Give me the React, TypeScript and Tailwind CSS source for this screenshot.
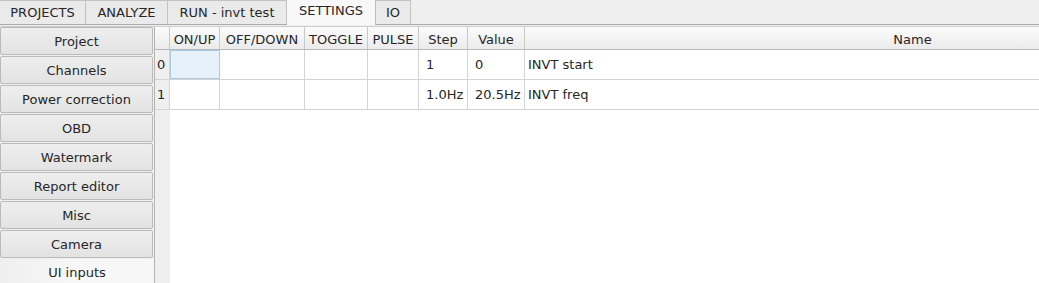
const tabs = [
  { label: 'PROJECTS', w: 'w-[86px]' },
  { label: 'ANALYZE', w: 'w-[82px]' },
  { label: 'RUN - invt test', w: 'w-[119px]' },
  { label: 'SETTINGS', w: 'w-[89px]', active: true },
  { label: 'IO', w: 'w-[35px]' },
]

const sections = [
  'Project',
  'Channels',
  'Power correction',
  'OBD',
  'Watermark',
  'Report editor',
  'Misc',
  'Camera',
]

const cols = [
  { label: 'ON/UP', w: 'w-[50px]' },
  { label: 'OFF/DOWN', w: 'w-[85px]' },
  { label: 'TOGGLE', w: 'w-[63px]' },
  { label: 'PULSE', w: 'w-[51px]' },
  { label: 'Step', w: 'w-[49px]' },
  { label: 'Value', w: 'w-[57px]' },
  { label: 'Name', w: 'w-[776px]' },
]

const rows = [
  ['', '', '', '', '1', '0', 'INVT start'],
  ['', '', '', '', '1.0Hz', '20.5Hz', 'INVT freq'],
]

const App = () => {
  return (
    <div className="w-[1039px] h-[283px] overflow-hidden bg-[#efefef] font-['DejaVu_Sans',sans-serif] text-[13px] leading-[16px] text-[#262626] flex flex-col">
      {/* tab bar */}
      <div className="flex items-end h-[25px] shrink-0 border-b border-[#aaaaaa]">
        {tabs.map((t) =>
          t.active ? (
            <div
              key={t.label}
              className={`${t.w} h-[26px] -mb-px flex items-center justify-center border-r border-t border-[#bcbcbc] bg-[#f8f8f8] pb-[3px]`}
            >
              {t.label}
            </div>
          ) : (
            <div
              key={t.label}
              className={`${t.w} h-[24px] flex items-center justify-center border-r border-t border-[#c2c2c2] bg-[#eaeaea] pt-[1px]`}
            >
              {t.label}
            </div>
          )
        )}
      </div>

      <div className="flex flex-1 min-h-0 mt-[1px] border-t border-[#cdcdcd]">
        {/* left menu */}
        <div className="w-[154px] shrink-0 flex flex-col gap-[1px]">
          {sections.map((s) => (
            <div
              key={s}
              className="w-[153px] h-[28px] shrink-0 flex items-center justify-center rounded-[2px] border border-[#bababa] bg-gradient-to-b from-[#eeeeee] to-[#e3e3e3] pt-[1px]"
            >
              {s}
            </div>
          ))}
          <div className="w-[154px] flex-1 flex items-center justify-center bg-gradient-to-r from-[#efefef] via-[#f7f7f7] to-[#f7f7f7] pt-[3px]">
            UI inputs
          </div>
        </div>

        {/* table */}
        <div className="flex-1 min-w-0 flex flex-col overflow-hidden border-l border-[#b4b4b4] bg-white">
          <div className="flex h-[23px] shrink-0 border-b border-[#b8b8b8] bg-gradient-to-b from-[#fbfbfb] to-[#ebebeb]">
            <div className="w-[15px] shrink-0 border-r border-[#c8c8c8]" />
            {cols.map((c) => (
              <div
                key={c.label}
                className={`${c.w} shrink-0 flex items-center justify-center border-r border-[#c8c8c8] pt-[3px]`}
              >
                {c.label}
              </div>
            ))}
          </div>

          {rows.map((r, i) => (
            <div key={i} className="flex h-[30px] shrink-0 border-b border-[#d4d4d4]">
              <div className="w-[15px] shrink-0 flex items-center pl-[2px] bg-[#efefef] border-r border-[#d4d4d4]">
                {i}
              </div>
              {r.map((v, j) => (
                <div
                  key={j}
                  className={`${cols[j].w} shrink-0 flex items-center border-r border-[#d4d4d4] ${
                    j === 6 ? 'pl-[3px]' : 'pl-[7px]'
                  } ${i === 0 && j === 0 ? 'bg-[#e6f1fa] outline outline-1 -outline-offset-1 outline-[#a9c9e4]' : ''}`}
                >
                  {v}
                </div>
              ))}
            </div>
          ))}

          <div className="flex flex-1">
            <div className="w-[15px] shrink-0 bg-[#efefef]" />
            <div className="flex-1" />
          </div>
        </div>
      </div>
    </div>
  )
}

export default App
